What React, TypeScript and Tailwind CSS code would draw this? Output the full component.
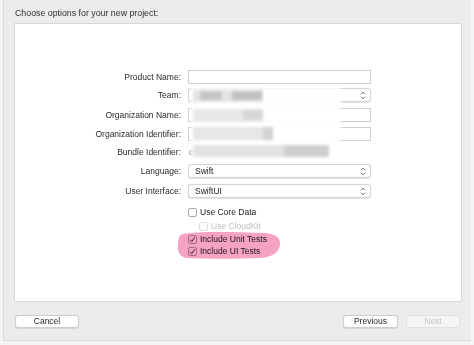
import type { ReactNode } from 'react';

function UpDown() {
  return (
    <svg width="6" height="9" viewBox="0 0 6 9" className="shrink-0">
      <path d="M1 3.2 L3 1.2 L5 3.2" fill="none" stroke="#555" strokeWidth="0.9" />
      <path d="M1 5.8 L3 7.8 L5 5.8" fill="none" stroke="#555" strokeWidth="0.9" />
    </svg>
  );
}

function Row({ label, mt, h = 'h-[14px]', children }: { label: string; mt: string; h?: string; children?: ReactNode }) {
  return (
    <div className={`flex items-center ${mt} ${h}`}>
      <div className="w-[167px] shrink-0 pr-[1px] text-right text-[#2a2a2a]">{label}</div>
      <div className="ml-[6px] w-[183px] h-full flex items-center">{children}</div>
    </div>
  );
}

function TextField() {
  return <div className="w-full h-full bg-white border border-[#cfcfcf]" />;
}

function Popup({ value }: { value?: string }) {
  return (
    <div className="w-full h-full bg-white border border-[#d4d4d4] rounded-[3px] shadow-[0_0.5px_1px_rgba(0,0,0,0.12)] flex items-center justify-between pl-[6px] pr-[4px]">
      <span className="text-[#1e1e1e]">{value}</span>
      <UpDown />
    </div>
  );
}

function Check({ checked, disabled }: { checked?: boolean; disabled?: boolean }) {
  return (
    <div
      className={`w-[9px] h-[9px] rounded-[2px] border bg-white flex items-center justify-center shrink-0 ${
        disabled ? 'border-[#dedede]' : 'border-[#a9a9a9]'
      }`}
    >
      {checked && (
        <svg width="7" height="7" viewBox="0 0 7 7">
          <path d="M1.2 3.8 L2.8 5.6 L5.8 1.2" fill="none" stroke="#333" strokeWidth="1" />
        </svg>
      )}
    </div>
  );
}

function CheckRow({ label, mt, checked, disabled, indent }: { label: string; mt: string; checked?: boolean; disabled?: boolean; indent?: boolean }) {
  return (
    <div className={`flex items-center h-[12px] ${mt} ${indent ? 'pl-[184px]' : 'pl-[173px]'}`}>
      <Check checked={checked} disabled={disabled} />
      <span className={`ml-[3px] ${disabled ? 'text-[#bdbdbd]' : 'text-[#222]'}`}>{label}</span>
    </div>
  );
}

export default function App() {
  return (
    <div
      className="w-[474px] h-[345px] bg-[#f4f4f4] text-[8.5px] leading-none overflow-hidden"
      style={{ fontFamily: '"Liberation Sans", Arial, sans-serif' }}
    >
      <div className="ml-[3px] w-[468px] h-[341px] bg-[#ececec] border-l border-b border-[#d7d7d7] flex flex-col">
        <div className="pl-[11px] pt-[9px] h-[23px] text-[8.8px] text-[#2f2f2f]">Choose options for your new project:</div>

        <div className="relative ml-[10px] w-[448px] h-[279px] bg-white border border-[#d8d8d8]">
          <div className="pt-[46px]">
            <Row label="Product Name:" mt="mt-0">
              <TextField />
            </Row>
            <Row label="Team:" mt="mt-[4px]">
              <Popup />
            </Row>
            <Row label="Organization Name:" mt="mt-[6px]">
              <TextField />
            </Row>
            <Row label="Organization Identifier:" mt="mt-[5px]">
              <TextField />
            </Row>
            <Row label="Bundle Identifier:" mt="mt-[4px]">
              <span className="text-[#666] pl-[1px]">c</span>
            </Row>
            <Row label="Language:" mt="mt-[5px]">
              <Popup value="Swift" />
            </Row>
            <Row label="User Interface:" mt="mt-[6px]">
              <Popup value="SwiftUI" />
            </Row>
            <CheckRow label="Use Core Data" mt="mt-[8px]" />
            <CheckRow label="Use CloudKit" mt="mt-[2px]" disabled indent />
            <CheckRow label="Include Unit Tests" mt="mt-[1px]" checked />
            <CheckRow label="Include UI Tests" mt="mt-0" checked />
          </div>

          {/* redaction blur over team / org fields */}
          <div className="absolute left-[176px] top-[63px] w-[150px] h-[72px] blur-[1.5px]">
            <div className="absolute inset-0 bg-white/95" />
            <div className="absolute left-[2px] top-[3px] w-[70px] h-[12px] bg-[#e4e4e4]" />
            <div className="absolute left-[9px] top-[4px] w-[22px] h-[9px] bg-[#c6c6c6]" />
            <div className="absolute left-[41px] top-[4px] w-[30px] h-[9px] bg-[#c2c2c2]" />
            <div className="absolute left-[2px] top-[22px] w-[70px] h-[13px] bg-[#e8e8e8]" />
            <div className="absolute left-[52px] top-[23px] w-[20px] h-[10px] bg-[#d6d6d6]" />
            <div className="absolute left-[2px] top-[40px] w-[80px] h-[13px] bg-[#e6e6e6]" />
            <div className="absolute left-[72px] top-[40px] w-[10px] h-[13px] bg-[#d2d2d2]" />
            <div className="absolute left-[2px] top-[58px] w-[136px] h-[12px] bg-[#e2e2e2]" />
            <div className="absolute left-[93px] top-[58px] w-[45px] h-[12px] bg-[#cfcfcf]" />
          </div>

          {/* pink highlight */}
          <svg
            className="absolute left-[162px] top-[206px] mix-blend-multiply pointer-events-none"
            width="105"
            height="30"
            viewBox="0 0 105 30"
          >
            <path
              d="M6 4 C20 1 60 2 88 3 C100 4 104 9 103 15 C102 22 96 27 84 28 C60 29 30 29 10 28 C3 27 0 22 1 15 C1 9 2 5 6 4 Z"
              fill="#f6a2c4"
            />
          </svg>
        </div>

        <div className="flex items-center mt-[13px] px-[11px]">
          <button className="w-[64px] h-[13px] bg-white border border-[#cdcdcd] rounded-[3px] shadow-[0_0.5px_1px_rgba(0,0,0,0.1)] text-[#2a2a2a] text-[8.5px] leading-none">
            Cancel
          </button>
          <div className="flex-1" />
          <button className="w-[55px] h-[13px] bg-white border border-[#cdcdcd] rounded-[3px] shadow-[0_0.5px_1px_rgba(0,0,0,0.1)] text-[#2a2a2a] text-[8.5px] leading-none">
            Previous
          </button>
          <button className="ml-[8px] w-[54px] h-[13px] bg-[#f5f5f5] border border-[#e0e0e0] rounded-[3px] text-[#c2c2c2] text-[8.5px] leading-none">
            Next
          </button>
        </div>
      </div>
    </div>
  );
}
